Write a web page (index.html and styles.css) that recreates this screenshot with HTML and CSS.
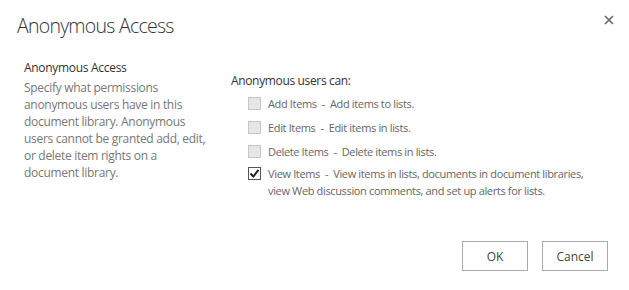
FILE: index.html
```html
<!DOCTYPE html>
<html>
<head>
<meta charset="utf-8">
<link rel="stylesheet" href="styles.css">
</head>
<body>
<div class="dialog">
  <div class="dialog-header">
    <h1 class="dialog-title">Anonymous Access</h1>
    <button class="close" aria-label="Close">
      <svg width="10" height="10" viewBox="0 0 10 10"><path d="M1 1L9 9M9 1L1 9" stroke="#666" stroke-width="1.6" fill="none"/></svg>
    </button>
  </div>
  <div class="dialog-body">
    <div class="section-info">
      <h2 class="section-title">Anonymous Access</h2>
      <p class="section-desc">Specify what permissions anonymous users have in this document library. Anonymous users cannot be granted add, edit, or delete item rights on a document library.</p>
    </div>
    <div class="section-fields">
      <div class="fields-label">Anonymous users can:</div>
      <ul class="options">
        <li class="option"><span class="box disabled"></span><span class="opt-text">Add Items&nbsp; - &nbsp;Add items to lists.</span></li>
        <li class="option"><span class="box disabled"></span><span class="opt-text">Edit Items&nbsp; - &nbsp;Edit items in lists.</span></li>
        <li class="option"><span class="box disabled"></span><span class="opt-text">Delete Items&nbsp; - &nbsp;Delete items in lists.</span></li>
        <li class="option option-last"><span class="box checked"><svg width="11" height="11" viewBox="0 0 11 11"><path d="M1.5 5.5L4.3 8.5L9.5 1.8" stroke="#222" stroke-width="2" fill="none"/></svg></span><span class="opt-text">View Items&nbsp; - &nbsp;View items in lists, documents in document libraries, view Web discussion comments, and set up alerts for lists.</span></li>
      </ul>
    </div>
  </div>
  <div class="dialog-footer">
    <button class="btn">OK</button>
    <button class="btn">Cancel</button>
  </div>
</div>
</body>
</html>
```

FILE: styles.css
```css
html, body {
  margin: 0;
  padding: 0;
  background: #fff;
}
body {
  font-family: "Open Sans", "Noto Sans", sans-serif;
  color: #444;
}
.dialog {
  width: 629px;
  height: 290px;
  box-sizing: border-box;
  display: flex;
  flex-direction: column;
}
.dialog-header {
  display: flex;
  justify-content: space-between;
  align-items: flex-start;
  padding: 12px 15px 0 17px;
}
.dialog-title {
  margin: 0;
  font-size: 19.5px;
  font-weight: 300;
  color: #333;
  line-height: 28px;
  letter-spacing: -0.75px;
}
.close {
  border: 0;
  background: none;
  padding: 0;
  margin-top: 3px;
  width: 10px;
  height: 10px;
  display: flex;
}
.dialog-body {
  display: flex;
  padding: 19px 0 0 24px;
}
.section-info {
  width: 186px;
}
.section-title {
  margin: 0;
  font-size: 12px;
  font-weight: 400;
  color: #333;
  line-height: 17px;
  letter-spacing: -0.3px;
}
.section-desc {
  margin: 3px 0 0;
  font-size: 12px;
  line-height: 17px;
  color: #777;
  letter-spacing: -0.3px;
}
.section-fields {
  margin-left: 21px;
  padding-top: 13px;
}
.fields-label {
  font-size: 12px;
  line-height: 17px;
  color: #333;
  letter-spacing: -0.35px;
}
.options {
  list-style: none;
  margin: 6px 0 0 17px;
  padding: 0;
  width: 340px;
}
.option {
  display: flex;
  align-items: flex-start;
  margin-bottom: 7px;
}
.option-last {
  margin-top: -2px;
}
.box {
  flex: none;
  width: 11px;
  height: 11px;
  border: 1px solid #ababab;
  margin: 2px 7px 0 0;
  display: flex;
  align-items: center;
  justify-content: center;
}
.box.disabled {
  background: #e6e6e6;
  border-color: #c6c6c6;
}
.box.checked {
  background: #fff;
  border-color: #555;
}
.opt-text {
  font-size: 11px;
  line-height: 17px;
  color: #666;
  letter-spacing: -0.35px;
}
.dialog-footer {
  margin-top: auto;
  display: flex;
  justify-content: flex-end;
  gap: 14px;
  padding: 0 21px 19px 0;
}
.btn {
  width: 66px;
  height: 30px;
  border: 1px solid #ababab;
  background: #fff;
  font-family: "Open Sans", "Noto Sans", sans-serif;
  font-size: 12px;
  color: #444;
  padding: 0;
}
```
